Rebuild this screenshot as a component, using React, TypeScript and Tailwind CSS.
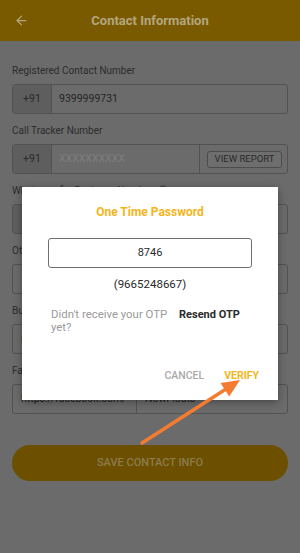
import { ArrowLeft, Info } from 'lucide-react'

function Label({ children }: { children: React.ReactNode }) {
  return <p className="h-[14px] text-[10px] leading-[14px] text-[#2c2c2c]">{children}</p>
}

function PhoneField({ value, placeholder }: { value?: string; placeholder?: string }) {
  return (
    <div className="flex h-[30px] items-stretch rounded-[3px] border border-[#525252]">
      <div className="flex w-[38px] items-center justify-center bg-[#5e5e5e] text-[10.5px] text-[#2a2a2a]">+91</div>
      <div className="flex flex-1 items-center border-l border-[#525252] pl-[7px] text-[10.5px]">
        {value ? <span className="text-[#252525]">{value}</span> : <span className="text-[#7e7e7e]">{placeholder}</span>}
      </div>
    </div>
  )
}

function TextField({ value }: { value: string }) {
  return (
    <div className="flex h-[30px] items-center rounded-[3px] border border-[#525252] pl-[8px] text-[10.5px] text-[#252525]">
      {value}
    </div>
  )
}

export default function App() {
  return (
    <div className="relative h-[553px] w-[300px] overflow-hidden bg-[#6b6b6b] font-['Roboto',sans-serif]">
      {/* Header */}
      <div className="relative flex h-[41px] items-center justify-center bg-[#795a00]">
        <ArrowLeft className="absolute left-[14px] top-[13px] h-[15px] w-[15px] text-[#b3a67f]" strokeWidth={2} />
        <h1 className="text-[13px] font-bold text-[#b3a67f]">Contact Information</h1>
      </div>

      {/* Form */}
      <div className="flex flex-col gap-[10px] px-[12px] pt-[23px]">
        <div className="flex flex-col gap-[6px]">
          <Label>Registered Contact Number</Label>
          <PhoneField value="9399999731" />
        </div>

        <div className="flex flex-col gap-[6px]">
          <Label>Call Tracker Number</Label>
          <div className="flex h-[30px] items-stretch rounded-[3px] border border-[#525252]">
            <div className="flex w-[38px] items-center justify-center bg-[#5e5e5e] text-[10.5px] text-[#2a2a2a]">+91</div>
            <div className="flex flex-1 items-center border-l border-[#525252] pl-[7px] text-[10.5px] text-[#7e7e7e]">XXXXXXXXXX</div>
            <div className="flex items-center border-l border-[#525252] pl-[7px] pr-[5px]">
              <div className="flex h-[17px] w-[75px] items-center justify-center rounded-[3px] border border-[#4c4c4c] bg-[#6e6e6e] text-[9.5px] text-[#2a2a2a]">
                VIEW REPORT
              </div>
            </div>
          </div>
        </div>

        <div className="flex flex-col gap-[6px]">
          <div className="flex items-center gap-[4px]">
            <Label>Whatsapp for Business Number</Label>
            <Info className="h-[12px] w-[12px] text-[#3a3a3a]" />
          </div>
          <PhoneField value="9399999731" />
        </div>

        <div className="flex flex-col gap-[6px]">
          <Label>Other Contact Number</Label>
          <TextField value="" />
        </div>

        <div className="flex flex-col gap-[6px]">
          <Label>Business Email</Label>
          <TextField value="info@nowfloats.com" />
        </div>

        <div className="flex flex-col gap-[6px]">
          <Label>Facebook Page</Label>
          <div className="flex h-[30px] items-stretch rounded-[3px] border border-[#525252] text-[10.5px] text-[#252525]">
            <div className="flex w-[123px] items-center overflow-hidden whitespace-nowrap pl-[8px]">https://facebook.com/</div>
            <div className="flex flex-1 items-center border-l border-[#525252] pl-[8px]">NowFloats</div>
          </div>
        </div>

        <button className="mt-[21px] flex h-[36px] items-center justify-center rounded-full bg-[#6c5000] text-[11px] font-medium text-[#8d7b4f]">
          SAVE CONTACT INFO
        </button>
      </div>

      {/* OTP dialog */}
      <div className="absolute left-[22px] top-[187px] flex h-[213px] w-[256px] flex-col bg-white shadow-[0_2px_8px_rgba(0,0,0,0.35)]">
        <h2 className="mt-[18px] text-center text-[12px] font-bold leading-[14px] text-[#f3b51c]">One Time Password</h2>
        <div className="mx-[26px] mt-[19px] flex h-[30px] items-center justify-center rounded-[3px] border border-[#6e6e6e] text-[11px] text-[#2a2a2a]">
          8746
        </div>
        <p className="mt-[9px] text-center text-[11.5px] leading-[14px] text-[#2a2a2a]">(9665248667)</p>
        <div className="mt-[17px] flex pl-[29px] pr-[10px]">
          <p className="w-[122px] text-[11.4px] leading-[13px] text-[#9a9a9a]">Didn't receive your OTP yet?</p>
          <p className="ml-[6px] text-[11px] font-bold leading-[13px] text-[#2a2a2a]">Resend OTP</p>
        </div>
        <div className="mt-auto mb-[17px] flex justify-end gap-[20px] pr-[19px] text-[10.5px] font-medium leading-[14px]">
          <span className="text-[#a9a9a9]">CANCEL</span>
          <span className="font-bold text-[#f3b51c]">VERIFY</span>
        </div>
      </div>

      {/* Annotation arrow */}
      <svg className="pointer-events-none absolute left-0 top-0" width="300" height="553" viewBox="0 0 300 553">
        <line x1="142" y1="443" x2="226" y2="389" stroke="#f47c30" strokeWidth="3.5" strokeLinecap="round" />
        <polygon points="240,380 220.6,383 229.2,396.4" fill="#f47c30" />
      </svg>
    </div>
  )
}
